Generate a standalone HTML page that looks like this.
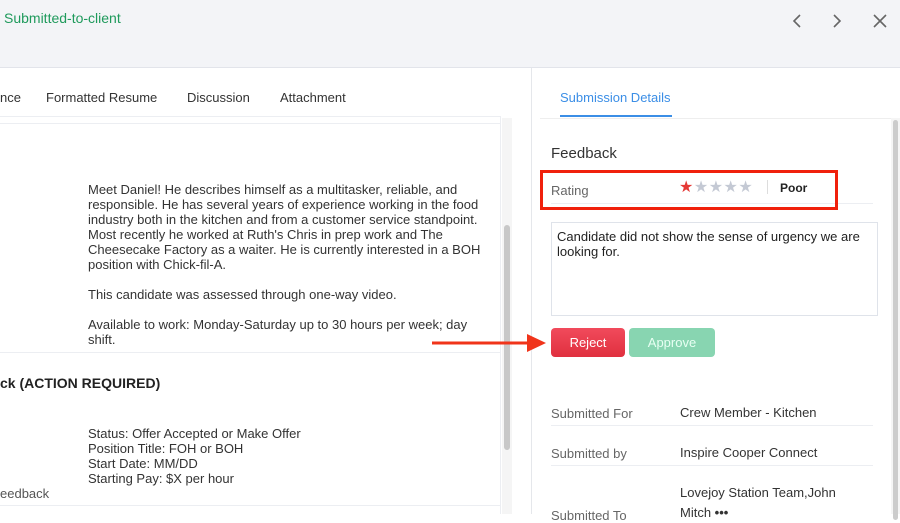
<!DOCTYPE html><html><head><style>
body{margin:0;width:900px;height:514px;overflow:hidden;background:#fff;font-family:"Liberation Sans",sans-serif;position:relative;color:#222}
.a{position:absolute;white-space:nowrap}
.t{font-size:13px;color:#333}
</style></head><body>
<div class="a" style="left:0;top:0;width:900px;height:67px;background:#f3f4f7;border-bottom:1px solid #e2e4ea"></div>
<div class="a" style="left:4px;top:10px;font-size:14px;color:#1f9a5c">Submitted-to-client</div>
<svg class="a" style="left:790px;top:12px" width="100" height="18"><path d="M10 3L4 9L10 15M44 3L50 9L44 15M84 3L96 15M96 3L84 15" stroke="#666" stroke-width="1.6" fill="none"/></svg>
<div class="a" style="left:531px;top:68px;width:1px;height:446px;background:#e5e7eb"></div>
<div class="a t" style="left:0;top:90px">nce</div>
<div class="a t" style="left:46px;top:90px">Formatted Resume</div>
<div class="a t" style="left:187px;top:90px">Discussion</div>
<div class="a t" style="left:280px;top:90px">Attachment</div>
<div class="a" style="left:0;top:116px;width:500px;height:1px;background:#eceef2"></div>
<div class="a" style="left:0;top:123px;width:500px;height:1px;background:#eceef2"></div>
<div class="a" style="left:500px;top:116px;width:1px;height:398px;background:#eceef2"></div>
<div class="a" style="left:502px;top:118px;width:10px;height:396px;background:#f5f5f5"></div>
<div class="a" style="left:504px;top:225px;width:6px;height:225px;background:#c8c8c8;border-radius:3px"></div>
<div class="a t" style="left:88px;top:182px;line-height:15px;white-space:normal;width:410px">Meet Daniel! He describes himself as a multitasker, reliable, and responsible. He has several years of experience working in the food industry both in the kitchen and from a customer service standpoint. Most recently he worked at Ruth's Chris in prep work and The Cheesecake Factory as a waiter. He is currently interested in a BOH position with Chick-fil-A.<br><br>This candidate was assessed through one-way video.<br><br>Available to work: Monday-Saturday up to 30 hours per week; day shift.</div>
<div class="a" style="left:0;top:352px;width:500px;height:1px;background:#eceef2"></div>
<div class="a" style="left:0;top:375px;font-size:14px;font-weight:bold">ck (ACTION REQUIRED)</div>
<div class="a t" style="left:88px;top:426px;line-height:15px">Status: Offer Accepted or Make Offer<br>Position Title: FOH or BOH<br>Start Date: MM/DD<br>Starting Pay: $X per hour</div>
<div class="a t" style="left:0;top:486px;color:#555">eedback</div>
<div class="a" style="left:0;top:505px;width:500px;height:1px;background:#eceef2"></div>
<div class="a" style="left:560px;top:90px;font-size:13px;color:#3b8ee6">Submission Details</div>
<div class="a" style="left:560px;top:115px;width:112px;height:2px;background:#3b8ee6"></div>
<div class="a" style="left:540px;top:118px;width:352px;height:1px;background:#eee"></div>
<div class="a" style="left:891px;top:118px;width:9px;height:396px;background:#f5f5f5"></div>
<div class="a" style="left:893px;top:120px;width:5px;height:400px;background:#ccc;border-radius:3px"></div>
<div class="a" style="left:551px;top:145px;font-size:15px;color:#333">Feedback</div>
<div class="a" style="left:551px;top:203px;width:322px;height:1px;background:#eceef2"></div>
<div class="a" style="left:540px;top:170px;width:292px;height:34px;border:3px solid #f0200c"></div>
<div class="a" style="left:551px;top:183px;font-size:13px;color:#666">Rating</div>
<div class="a" style="left:679px;top:177px;font-size:16px;letter-spacing:0.5px"><span style="color:#e53935">★</span><span style="color:#c4c9d4">★★★★</span></div>
<div class="a" style="left:767px;top:180px;width:1px;height:14px;background:#ddd"></div>
<div class="a" style="left:780px;top:181px;font-size:12px;font-weight:bold">Poor</div>
<div class="a" style="left:551px;top:222px;width:325px;height:92px;border:1px solid #dfe3ea"></div>
<div class="a t" style="left:557px;top:229px;line-height:15px;color:#222">Candidate did not show the sense of urgency we are<br>looking for.</div>
<div class="a" style="left:551px;top:328px;width:74px;height:29px;background:linear-gradient(#f14a5c,#e0303f);border-radius:4px;color:#fff;font-size:13px;text-align:center;line-height:29px">Reject</div>
<div class="a" style="left:629px;top:328px;width:86px;height:29px;background:#88d5b1;border-radius:4px;color:#e8fff3;font-size:13px;text-align:center;line-height:29px">Approve</div>
<svg class="a" style="left:430px;top:332px" width="120" height="22"><path d="M2 11H100" stroke="#f0341a" stroke-width="3"/><path d="M97 2L116 11L97 20Z" fill="#f0341a"/></svg>
<div class="a t" style="left:551px;top:406px;color:#666">Submitted For</div>
<div class="a t" style="left:680px;top:405px">Crew Member - Kitchen</div>
<div class="a" style="left:551px;top:425px;width:322px;height:1px;background:#eceef2"></div>
<div class="a t" style="left:551px;top:446px;color:#666">Submitted by</div>
<div class="a t" style="left:680px;top:445px">Inspire Cooper Connect</div>
<div class="a" style="left:551px;top:465px;width:322px;height:1px;background:#eceef2"></div>
<div class="a t" style="left:680px;top:485px">Lovejoy Station Team,John</div>
<div class="a t" style="left:680px;top:505px">Mitch <b>•••</b></div>
<div class="a t" style="left:551px;top:508px;color:#666">Submitted To</div>
</body></html>
